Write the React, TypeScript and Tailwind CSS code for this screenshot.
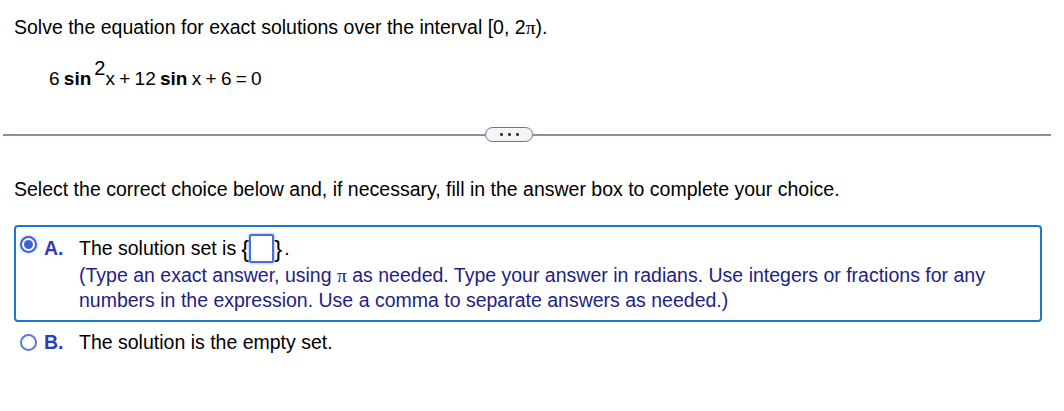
export default function App() {
  return (
    <div className="w-[1064px] h-[411px] bg-white text-[19.5px] text-black" style={{ fontFamily: '"Liberation Sans", Arial, sans-serif' }}>
      <div className="pl-[14px] pt-[15px] leading-[24px]">
        Solve the equation for exact solutions over the interval [0, 2<span style={{ fontFamily: '"Liberation Serif", serif' }}>π</span>).
      </div>
      <div className="pl-[49px] pt-[27px] leading-[24px] flex items-end text-[19px] [word-spacing:-1px]">
        <span>6 <b>sin</b></span>
        <span className="relative -top-[11px] ml-[3px] text-[20px]">2</span>
        <span>x + 12 <b>sin</b> x + 6 = 0</span>
      </div>

      <div className="mt-[36px] mx-[3px] w-[1048px] flex items-center">
        <div className="w-[482px] h-[2px] bg-[#8a909c]" />
        <div className="w-[48px] h-[15px] rounded-full border border-[#6b7585] bg-[#f4f5f7] flex items-center justify-center gap-[5px]">
          <span className="w-[3px] h-[3px] rounded-[1px] bg-[#3a3f4a]" />
          <span className="w-[3px] h-[3px] rounded-[1px] bg-[#3a3f4a]" />
          <span className="w-[3px] h-[3px] rounded-[1px] bg-[#3a3f4a]" />
        </div>
        <div className="flex-1 h-[2px] bg-[#8a909c]" />
      </div>

      <div className="pl-[14px] pt-[35px] leading-[24px]">
        Select the correct choice below and, if necessary, fill in the answer box to complete your choice.
      </div>

      <div className="ml-[14px] mt-[24px] w-[1028px] border-2 border-[#1b78cf] rounded-[4px] pt-[7px] pb-[7px] flex">
        <div className="pl-[4px] pt-[2px]">
          <div className="w-[17px] h-[17px] rounded-full border-2 border-[#3f5fd6] flex items-center justify-center shadow-[0_0_3px_#8fa6ee]">
            <div className="w-[9px] h-[9px] rounded-full bg-[#3f5fd6]" />
          </div>
        </div>
        <div className="ml-[7px] w-[35px] pt-[2px] font-bold text-[#2c3db8] leading-[24px]">A.</div>
        <div className="leading-[25px]">
          <div className="flex items-center h-[29px]">
            <span>The solution set is</span>
            <span className="ml-[5px] text-[24px] leading-none">{'{'}</span>
            <span className="w-[25px] h-[29px] border-2 border-[#4a6fd8] rounded-[2px] shadow-[0_0_3px_#7f9be8] bg-white" />
            <span className="text-[24px] leading-none">{'}'}</span>
            <span className="ml-[2px]">.</span>
          </div>
          <div className="text-[#1e2286]">
            (Type an exact answer, using <span style={{ fontFamily: '"Liberation Serif", serif' }}>π</span> as needed. Type your answer in radians. Use integers or fractions for any
            <br />
            numbers in the expression. Use a comma to separate answers as needed.)
          </div>
        </div>
      </div>

      <div className="ml-[16px] mt-[8px] flex">
        <div className="pl-[4px] pt-[4px]">
          <div className="w-[17px] h-[17px] rounded-full border-2 border-[#5b78d8]" />
        </div>
        <div className="ml-[7px] w-[35px] font-bold text-[#2c3db8] leading-[24px]">B.</div>
        <div className="leading-[24px]">The solution is the empty set.</div>
      </div>
    </div>
  );
}
